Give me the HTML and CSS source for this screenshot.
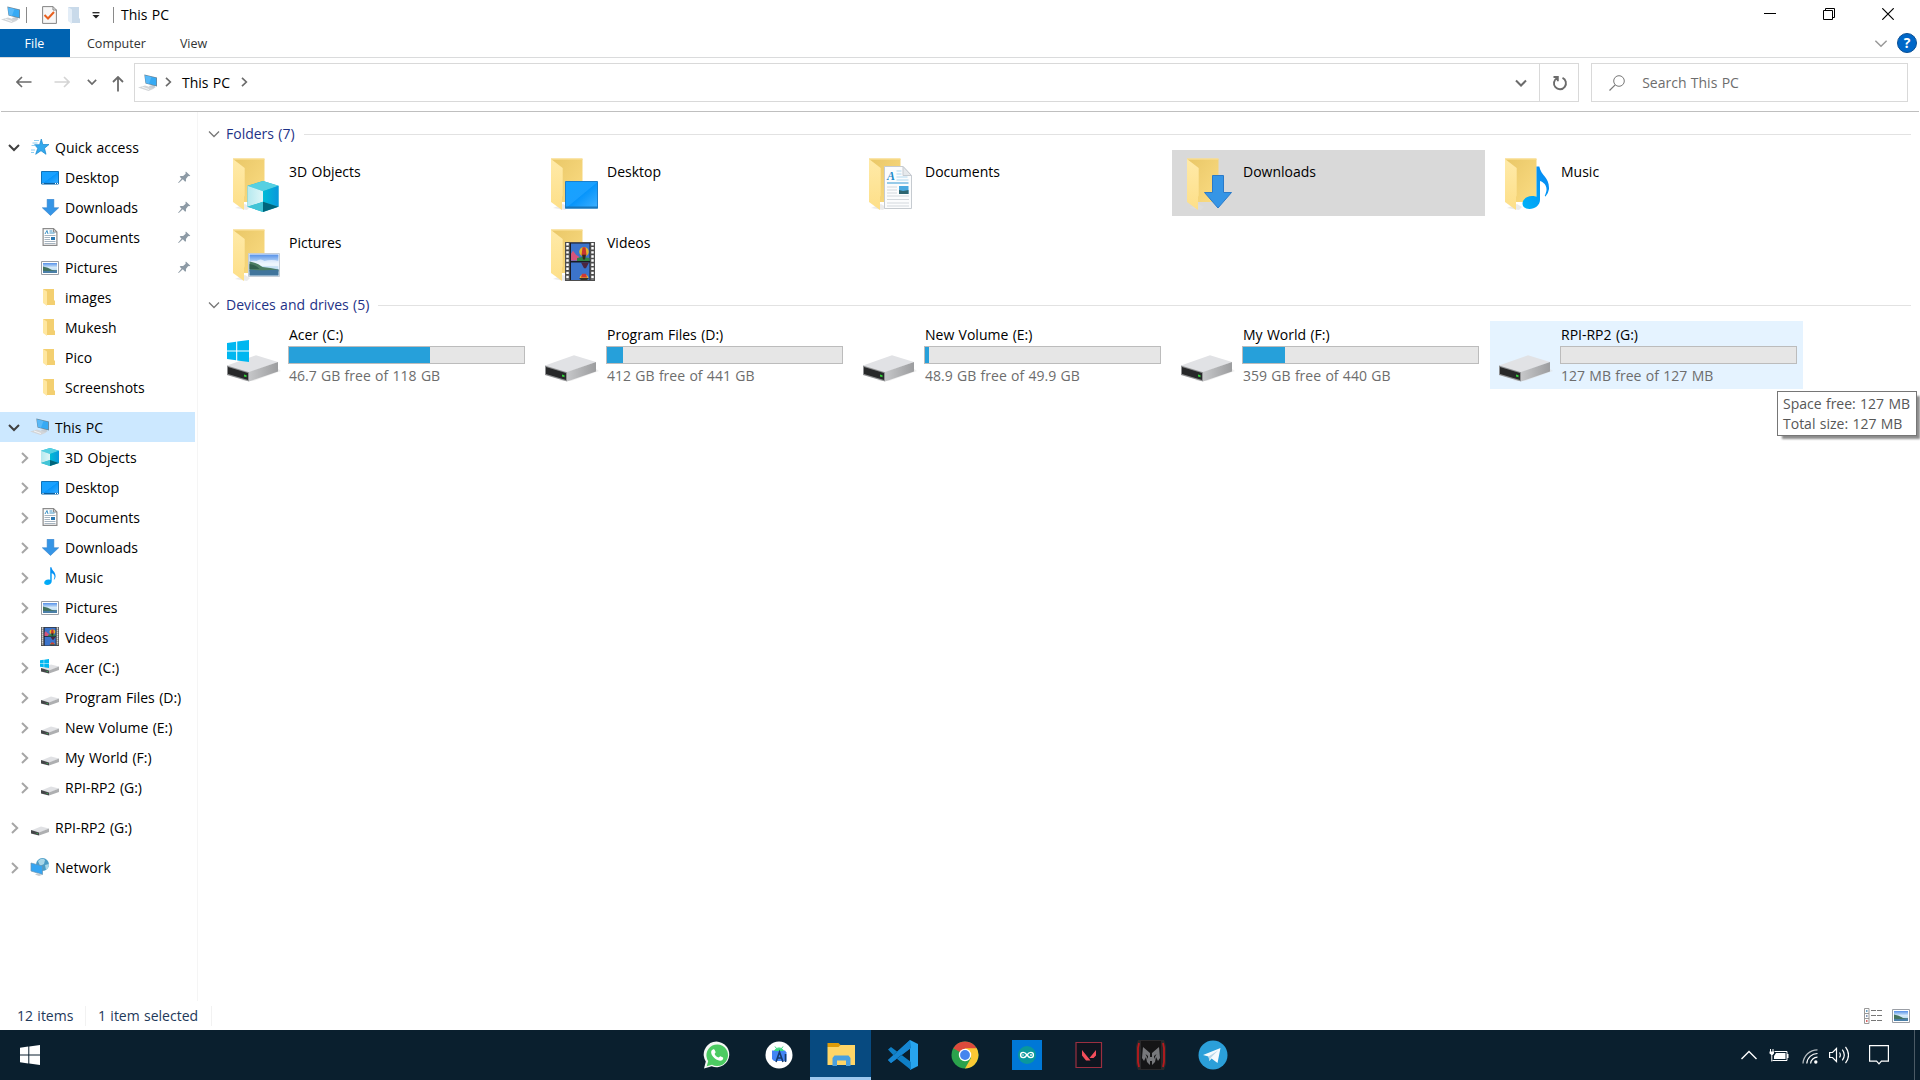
FILE: index.html
```
<!DOCTYPE html>
<html lang="en">
<head>
    <meta charset="UTF-8">
    <meta name="viewport" content="width=device-width, initial-scale=1.0">
    <title>This PC</title>
    <link rel="stylesheet" href="styles.css">
</head>
<body>
    <!-- icon sprite -->
    <svg class="sprite" width="0" height="0">
        <defs>
            <linearGradient id="gback" x1="0" y1="0" x2="1" y2="1"><stop offset="0" stop-color="#e9c767"/><stop offset="1" stop-color="#fbdc83"/></linearGradient>
            <linearGradient id="gfront" x1="0" y1="0" x2="0" y2="1"><stop offset="0" stop-color="#ffeaa8"/><stop offset="1" stop-color="#fddf88"/></linearGradient>
            <linearGradient id="gblue" x1="0" y1="0" x2="1" y2="1"><stop offset="0" stop-color="#16a3ff"/><stop offset=".5" stop-color="#1aa0ff"/><stop offset=".52" stop-color="#0795fb"/><stop offset="1" stop-color="#3fb0ff"/></linearGradient>
            <linearGradient id="gsky" x1="0" y1="0" x2="0" y2="1"><stop offset="0" stop-color="#5590e8"/><stop offset=".45" stop-color="#d5eafa"/><stop offset="1" stop-color="#a8cfe8"/></linearGradient>
            <linearGradient id="gside" x1="0" y1="0" x2="1" y2="0"><stop offset="0" stop-color="#c6c7c9"/><stop offset="1" stop-color="#9c9d9f"/></linearGradient>
            <linearGradient id="gcl" x1="0" y1="0" x2="1" y2="0"><stop offset="0" stop-color="#b5e9ef"/><stop offset="1" stop-color="#dff6f7"/></linearGradient>
            <linearGradient id="gcr" x1="0" y1="0" x2="1" y2="0"><stop offset="0" stop-color="#00bcd6"/><stop offset="1" stop-color="#0a97dc"/></linearGradient>
            <linearGradient id="gnote" x1="0" y1="1" x2="1" y2="0"><stop offset="0" stop-color="#00b4f8"/><stop offset="1" stop-color="#0784f2"/></linearGradient>
        </defs>
        <symbol id="folder" viewBox="0 0 36 54">
            <path d="M2 50l12 2 3-3-5-3z" fill="#ddd" opacity=".6"/>
            <path d="M0 1h31.500v43H10z" fill="url(#gback)"/>
            <path d="M0 1h31.500" stroke="#f8dc8f" stroke-width="1.500"/>
            <path d="M0 1l11.700 9v27.500L11 39v13L0 44z" fill="url(#gfront)"/>
        </symbol>
        <symbol id="cube" viewBox="0 0 32 32">
            <path d="M16 0l16 5v21.500L16 32 0 26.500V5z" fill="#1fb8cf"/>
            <path d="M0 5l16-5 16 5-16 5.500z" fill="#56d0e2"/>
            <path d="M0 5l16 5.500v11L0 26.500z" fill="url(#gcl)"/>
            <path d="M32 5l-16 5.500v11l16 5z" fill="url(#gcr)"/>
            <path d="M0 26.500l16-5V32z" fill="#42c4d6"/>
            <path d="M32 26.500l-16-5V32z" fill="#00657c"/>
        </symbol>
        <symbol id="monitor" viewBox="0 0 18 14" preserveAspectRatio="none">
            <path d="M.5.500h17v12.500H.5z" fill="url(#gblue)" stroke="#1272b8"/>
            <path d="M1 12.500h16" stroke="#0d5e9c" stroke-width="1.200"/>
            <path d="M1.500 12.500h1M14 12.500h1M16 12.500h1" stroke="#fff"/>
        </symbol>
        <symbol id="screen" viewBox="0 0 33 28">
            <path d="M.5.500h32v26.500H.5z" fill="url(#gblue)" stroke="#1c7ecb"/>
            <path d="M0 26.500h33" stroke="#1776bb" stroke-width="2"/>
        </symbol>
        <symbol id="arrow" viewBox="0 0 28 34" preserveAspectRatio="none">
            <path d="M8.500.500h11V17.500H27.500L14 33 .5 17.500h8z" fill="#3595e6" stroke="#2a7ac9"/>
        </symbol>
        <symbol id="doc" viewBox="0 0 15 18">
            <path d="M.6.600H11L14.400 4v13.400H.6z" fill="#fff" stroke="#8b8b8b" stroke-width="1.200"/>
            <path d="M11 .5V4h3.500" fill="none" stroke="#8b8b8b"/>
            <path d="M2.500 6l2-3.500L5.500 6M7 3h3M7 5h5" fill="none" stroke="#3d93c6"/>
            <path d="M2 7.500h11M2 9.500h5.500M2 11.500h5.500M2 13.500h11M2 15.500h11" stroke="#9cacb9" stroke-width=".9"/>
            <path d="M8.500 9h4v3h-4z" fill="#2878b4"/>
        </symbol>
        <symbol id="bigdoc" viewBox="0 0 28 43">
            <path d="M.5.500h18.500l8.500 9v33H.5z" fill="#fbfcfd" stroke="#c6cbd0"/>
            <path d="M19 .5v9h8.500z" fill="#e6e9ec" stroke="#c6cbd0"/>
            <path d="M3 17h21.500" stroke="#3299d5"/>
            <path d="M12.500 5h5M12.500 8h5M12.500 11h11M12.500 14h12" stroke="#b0d8ef"/>
            <path d="M3 21h10M3 24h10M3 27h10M3 30h22M3 33.500h22M3 37h22M3 40h22" stroke="#d3d8dd"/>
            <path d="M15 20h9.500v8H15z" fill="#4aa9e0"/><path d="M15 24l4 1 5.500-1v4H15z" fill="#2d6570"/>
        </symbol>
        <symbol id="photo" viewBox="0 0 18 14" preserveAspectRatio="none">
            <path d="M.5.500h17v13H.5z" fill="#fff" stroke="#9a9ea5"/>
            <path d="M2 2h14v10H2z" fill="url(#gsky)"/>
            <path d="M2 5.500q5 .5 9 3.500l5 .3V12H2z" fill="#44735f"/>
            <path d="M2 9.700q7 1 14-.4V12H2z" fill="#4a7fa8"/>
        </symbol>
        <symbol id="bigphoto" viewBox="0 0 32 24" preserveAspectRatio="none">
            <path d="M.5.500h31v23H.5z" fill="#fff" stroke="#c4cdd7"/>
            <path d="M1.500 1.500h29v21h-29z" fill="url(#gsky)"/>
            <path d="M1.500 9q3-2 7-1 4-3 8 0 7-2 14 0v5h-29z" fill="#fff" opacity=".6"/>
            <path d="M1.500 8.500q7 1 13 5.500 8 .5 16 2.500v2h-29z" fill="#4c7d62"/>
            <path d="M1.500 11q7 1 10 5h-10z" fill="#315f4d"/>
            <path d="M1.500 16.500q14 1.500 29 0v6h-29z" fill="#41759c"/>
        </symbol>
        <symbol id="film" viewBox="0 0 30 40" preserveAspectRatio="none">
            <path d="M0 0h30v40H0z" fill="#4d4d4d"/>
            <path d="M2.500 1v38M27.500 1v38" stroke="#fff" stroke-width="2.500" stroke-dasharray="2.500 1.700"/>
            <path d="M5 1h20v38H5z" fill="#1b1b22"/>
            <path d="M6 1.500h18.500v18H6zM6 21h18.500v18H6z" fill="#3c74cb"/>
            <path d="M6 12l2-3 3 4 3 2v4H6z" fill="#d5547b"/>
            <path d="M12 16.500l5-1 7.500 1v3H12z" fill="#318443"/>
            <circle cx="19" cy="10" r="4.800" fill="#e3b52b"/><path d="M17.500 5.500h3l1 8h-5z" fill="#c63531"/><path d="M17 13h4l-1 5h-2z" fill="#34281c"/>
            <path d="M16 21h8l-3 6h-2z" fill="#4b263e"/>
            <path d="M14.500 37a4.600 5 0 0 1 9 0z" fill="#e6b531"/><path d="M17 32.500h4l1 4h-6z" fill="#ce3934"/><path d="M14 37h10l-2 2h-6z" fill="#343426"/>
        </symbol>
        <symbol id="note" viewBox="0 0 28 43" preserveAspectRatio="none">
            <path d="M14.500.500h2.800C19 10 27.500 11 27 23q-.5 4-3.500 7.500l-.8-.5c4-8 1-13-4.700-15V34c0 5-5 9-10.500 9C3 43 .5 40.500.5 37.500c0-4 4-7.500 9.500-7.500 2 0 3.500.3 4.500.8z" fill="url(#gnote)"/>
        </symbol>
        <symbol id="smallfolder" viewBox="0 0 12 17">
            <path d="M0 0h11v11l1 1v4H3z" fill="#f3cf70"/><path d="M0 0l4 2.500V17L0 14z" fill="#ffe7a0"/>
        </symbol>
        <symbol id="drive" viewBox="0 0 54 28">
            <path d="M14 26h12l28-10-3-2z" fill="#ddd" opacity=".5"/>
            <path d="M0 10.500L29 .3 51 7 22 17.500z" fill="#e1e2e5"/>
            <path d="M51 7v9.500L22 26.500v-9.500z" fill="url(#gside)"/>
            <path d="M0 10.500l22 6.800v9.200L0 20z" fill="#8f9092"/>
            <path d="M1 12l20 6v7L1 19z" fill="#272829"/>
            <path d="M17 19.500l2.500.7v2l-2.500-.6z" fill="#32d038"/>
        </symbol>
        <symbol id="smalldrive" viewBox="0 0 18 10">
            <path d="M0 4.500L10 .5 18 2.500 8 7z" fill="#e0e1e4"/><path d="M18 2.500V6L8 9.500V6.500z" fill="#aeafb1"/><path d="M0 4l8 2.500v3L0 7.500z" fill="#444648"/><path d="M5.500 7.500h1.500" stroke="#3c9d53"/>
        </symbol>
        <symbol id="win" viewBox="0 0 20 20">
            <path d="M0 2.800L8.300 1.600v7.900H0zM9.300 1.400L20 0v9.500H9.300zM0 10.500h8.300v8L0 17.300zM9.300 10.500H20V20L9.300 18.600z" fill="currentColor"/>
        </symbol>
        <symbol id="pc" viewBox="0 0 20 18">
            <path d="M11 12l5-1.500 1.500 3-5 1.500z" fill="#c5cdd4"/>
            <path d="M6.300.6L19 3.500v9L7.500 9.600z" fill="#6d8799"/>
            <path d="M7 1.400l11.200 2.700v7.500L8 9z" fill="#36aaf4"/>
            <path d="M7 1.400l6.500 1.600L11 9.800 8 9z" fill="#58b9f8"/>
            <path d="M0 13.500l7-2 9.500 3-6 2.500z" fill="#d2d5d8"/><path d="M4 13l7 2.500" stroke="#f3f4f5"/>
        </symbol>
        <symbol id="star" viewBox="0 0 18 18">
            <path d="M10.300 1l1.500 5.500H18L13.500 10.200 15 16.300l-5-3.600-5.300 3.600 2-6L3.600 6.700h5z" fill="#34a9ed" stroke="#1686cf" stroke-width=".7"/>
            <path d="M3 2.500h5M1.500 5h5M.5 7.500h4M0 12h4M0 14.500h3" stroke="#81c8f0" stroke-width=".9"/>
        </symbol>
        <symbol id="net" viewBox="0 0 20 18">
            <circle cx="12.500" cy="6.500" r="6.500" fill="#4b9cc6"/><path d="M8 3q4-4 7-1l-1 4-4 2zM15 7l4-1q0 4-3 6z" fill="#a8d6e8"/>
            <path d="M1 5l11.500 3v8.500L1 13z" fill="#36a5f2" stroke="#6a93b0" stroke-width=".7"/><path d="M5 16.500l3-1.500 4 2-3 1z" fill="#c4ccd2"/>
        </symbol>
        <symbol id="pin" viewBox="0 0 14 14">
            <path d="M8.500.5L13.300 5l-1.500.6-.8-.1-2.500 3 .2 2.200-1 .8-2.500-2.600L.8 13l-.7-.3 3.700-4.600-2-2 1-.8 2.700.1 2.800-2.500-.3-1z" fill="#8d9aa5"/>
        </symbol>
        <symbol id="down" viewBox="0 0 12 8"><path d="M1 1.500l5 5 5-5" fill="none" stroke="currentColor" stroke-width="var(--sw, 1.300)"/></symbol>
        <symbol id="right" viewBox="0 0 8 12"><path d="M1 1l5.200 5L1 11" fill="none" stroke="currentColor" stroke-width="2"/></symbol>
    </svg>

    <div class="titlebar">
        <svg class="t-pc"><use href="#pc"/></svg>
        <i class="vsep"></i>
        <svg class="t-check" viewBox="0 0 15 18"><path d="M.6.600H11L14.400 4v13.400H.6z" fill="#f7f7f7" stroke="#858585"/><path d="M11 .5V4h3.500" fill="none" stroke="#858585"/><path d="M2.500 9L6 12.500l6-6.500" fill="none" stroke="#e8601f" stroke-width="2"/></svg>
        <svg class="t-folder" viewBox="0 0 12 17"><path d="M0 0h11v11l1 1v4H3z" fill="#c9daea"/><path d="M0 0l4 2.500V17L0 14z" fill="#e3edf7"/></svg>
        <svg class="t-menu" viewBox="0 0 8 7"><path d="M.5.700h7" stroke="#222" stroke-width="1.300"/><path d="M.5 3h7L4 6.500z" fill="#222"/></svg>
        <i class="vsep"></i>
        <span class="title">This PC</span>
        <div class="winbtns">
            <svg viewBox="0 0 12 12"><path d="M0 5.500h12" stroke="#000"/></svg>
            <svg viewBox="0 0 12 12"><path d="M.5 2.500h9v9h-9zM2.500 2.500v-2h9v9h-2" fill="none" stroke="#000"/></svg>
            <svg viewBox="0 0 12 12"><path d="M.3.300l11.400 11.400M11.700.300L.3 11.700" stroke="#000" stroke-width="1.200"/></svg>
        </div>
    </div>

    <div class="tabs">
        <span class="file">File</span>
        <span class="tab-computer">Computer</span>
        <span class="tab-view">View</span>
        <svg class="collapse"><use href="#down"/></svg>
        <b class="help">?</b>
    </div>

    <div class="addressbar">
        <div class="arrows">
            <svg class="back" viewBox="0 0 16 12"><path d="M15.500 6H1M6 1L1 6l5 5" fill="none" stroke="#6b6b6b" stroke-width="1.600"/></svg>
            <svg class="forward" viewBox="0 0 16 12"><path d="M.5 6H15M10 1l5 5-5 5" fill="none" stroke="#d4d4d4" stroke-width="1.600"/></svg>
            <svg class="recent"><use href="#down"/></svg>
            <svg class="up" viewBox="0 0 12 16"><path d="M6 15.500V1M1 6l5-5 5 5" fill="none" stroke="#6b6b6b" stroke-width="1.800"/></svg>
        </div>
        <div class="path">
            <svg class="p-pc"><use href="#pc"/></svg>
            <svg class="crumb"><use href="#right"/></svg>
            <span>This PC</span>
            <svg class="crumb"><use href="#right"/></svg>
            <svg class="drop"><use href="#down"/></svg>
            <div class="refresh"><svg viewBox="0 0 16 16"><path d="M10.500 2.800a6 6 0 1 1-5.500.2M1.500 2h4.300v4.300" fill="none" stroke="#6b6b6b" stroke-width="1.900"/></svg></div>
        </div>
        <div class="search">
            <svg viewBox="0 0 16 16"><circle cx="10" cy="6" r="5.300" fill="none" stroke="#777"/><path d="M6.200 9.800L.5 15.500" stroke="#777" stroke-width="1.200"/></svg>
            <span>Search This PC</span>
        </div>
    </div>

    <div class="main">
        <ul class="nav">
            <li class="top open"><svg class="chev"><use href="#down"/></svg><svg class="ico"><use href="#star"/></svg><span>Quick access</span></li>
            <li class="pinned"><svg class="ico wide"><use href="#monitor"/></svg><span>Desktop</span><svg class="pin"><use href="#pin"/></svg></li>
            <li class="pinned"><svg class="ico arr"><use href="#arrow"/></svg><span>Downloads</span><svg class="pin"><use href="#pin"/></svg></li>
            <li class="pinned"><svg class="ico"><use href="#doc"/></svg><span>Documents</span><svg class="pin"><use href="#pin"/></svg></li>
            <li class="pinned"><svg class="ico wide"><use href="#photo"/></svg><span>Pictures</span><svg class="pin"><use href="#pin"/></svg></li>
            <li class="pinned"><svg class="ico fold"><use href="#smallfolder"/></svg><span>images</span></li>
            <li class="pinned"><svg class="ico fold"><use href="#smallfolder"/></svg><span>Mukesh</span></li>
            <li class="pinned"><svg class="ico fold"><use href="#smallfolder"/></svg><span>Pico</span></li>
            <li class="pinned"><svg class="ico fold"><use href="#smallfolder"/></svg><span>Screenshots</span></li>
            <li class="top open group current"><svg class="chev"><use href="#down"/></svg><svg class="ico"><use href="#pc"/></svg><span>This PC</span></li>
            <li><svg class="chev"><use href="#right"/></svg><svg class="ico"><use href="#cube"/></svg><span>3D Objects</span></li>
            <li><svg class="chev"><use href="#right"/></svg><svg class="ico wide"><use href="#monitor"/></svg><span>Desktop</span></li>
            <li><svg class="chev"><use href="#right"/></svg><svg class="ico"><use href="#doc"/></svg><span>Documents</span></li>
            <li><svg class="chev"><use href="#right"/></svg><svg class="ico arr"><use href="#arrow"/></svg><span>Downloads</span></li>
            <li><svg class="chev"><use href="#right"/></svg><svg class="ico mus"><use href="#note"/></svg><span>Music</span></li>
            <li><svg class="chev"><use href="#right"/></svg><svg class="ico wide"><use href="#photo"/></svg><span>Pictures</span></li>
            <li><svg class="chev"><use href="#right"/></svg><svg class="ico vid"><use href="#film"/></svg><span>Videos</span></li>
            <li><svg class="chev"><use href="#right"/></svg><svg class="ico acer" viewBox="0 0 20 18"><use href="#smalldrive" x="1" y="6" width="18" height="10"/><g class="cyan"><use href="#win" y="1" width="9" height="9"/></g></svg><span>Acer (C:)</span></li>
            <li><svg class="chev"><use href="#right"/></svg><svg class="ico drv"><use href="#smalldrive"/></svg><span>Program Files (D:)</span></li>
            <li><svg class="chev"><use href="#right"/></svg><svg class="ico drv"><use href="#smalldrive"/></svg><span>New Volume (E:)</span></li>
            <li><svg class="chev"><use href="#right"/></svg><svg class="ico drv"><use href="#smalldrive"/></svg><span>My World (F:)</span></li>
            <li><svg class="chev"><use href="#right"/></svg><svg class="ico drv"><use href="#smalldrive"/></svg><span>RPI-RP2 (G:)</span></li>
            <li class="top group"><svg class="chev"><use href="#right"/></svg><svg class="ico drv"><use href="#smalldrive"/></svg><span>RPI-RP2 (G:)</span></li>
            <li class="top group"><svg class="chev"><use href="#right"/></svg><svg class="ico"><use href="#net"/></svg><span>Network</span></li>
        </ul>

        <div class="content">
            <div class="heading"><svg><use href="#down"/></svg><span>Folders (7)</span></div>
            <div class="tiles folders">
                <div class="tile"><svg class="pic" viewBox="0 0 56 66"><use href="#folder" x="5" y="8" width="36" height="54"/><use href="#cube" x="19" y="31" width="32" height="31"/></svg><span>3D Objects</span></div>
                <div class="tile"><svg class="pic" viewBox="0 0 56 66"><use href="#folder" x="5" y="8" width="36" height="54"/><use href="#screen" x="19" y="31" width="33" height="28"/></svg><span>Desktop</span></div>
                <div class="tile"><svg class="pic" viewBox="0 0 56 66"><use href="#folder" x="5" y="8" width="36" height="54"/><use href="#bigdoc" x="20" y="16" width="28" height="43"/><text x="23" y="30" class="doc-letter">A</text></svg><span>Documents</span></div>
                <div class="tile selected"><svg class="pic" viewBox="0 0 56 66"><use href="#folder" x="5" y="8" width="36" height="54"/><use href="#arrow" x="22" y="25" width="28" height="34"/></svg><span>Downloads</span></div>
                <div class="tile"><svg class="pic" viewBox="0 0 56 66"><use href="#folder" x="5" y="8" width="36" height="54"/><use href="#note" x="22" y="16" width="28" height="43"/></svg><span>Music</span></div>
                <div class="tile"><svg class="pic" viewBox="0 0 56 66"><use href="#folder" x="5" y="8" width="36" height="54"/><use href="#bigphoto" x="20" y="32" width="32" height="24"/></svg><span>Pictures</span></div>
                <div class="tile"><svg class="pic" viewBox="0 0 56 66"><use href="#folder" x="5" y="8" width="36" height="54"/><use href="#film" x="19" y="21" width="30" height="39"/></svg><span>Videos</span></div>
            </div>

            <div class="heading second"><svg><use href="#down"/></svg><span>Devices and drives (5)</span></div>
            <div class="tiles drives">
                <div class="tile"><svg class="pic" viewBox="0 0 56 68"><use href="#drive" x="-1" y="34" width="54" height="28"/><g class="cyan"><use href="#win" x="-1" y="19" width="22" height="22"/></g></svg><div class="info"><span>Acer (C:)</span><div class="bar"><div style="width:141px"></div></div><small>46.7 GB free of 118 GB</small></div></div>
                <div class="tile"><svg class="pic" viewBox="0 0 56 68"><use href="#drive" x="-1" y="34" width="54" height="28"/></svg><div class="info"><span>Program Files (D:)</span><div class="bar"><div style="width:16px"></div></div><small>412 GB free of 441 GB</small></div></div>
                <div class="tile"><svg class="pic" viewBox="0 0 56 68"><use href="#drive" x="-1" y="34" width="54" height="28"/></svg><div class="info"><span>New Volume (E:)</span><div class="bar"><div style="width:4px"></div></div><small>48.9 GB free of 49.9 GB</small></div></div>
                <div class="tile"><svg class="pic" viewBox="0 0 56 68"><use href="#drive" x="-1" y="34" width="54" height="28"/></svg><div class="info"><span>My World (F:)</span><div class="bar"><div style="width:42px"></div></div><small>359 GB free of 440 GB</small></div></div>
                <div class="tile hover"><svg class="pic" viewBox="0 0 56 68"><use href="#drive" x="-1" y="34" width="54" height="28"/></svg><div class="info"><span>RPI-RP2 (G:)</span><div class="bar"></div><small>127 MB free of 127 MB</small></div></div>
            </div>
        </div>
    </div>
    <div class="tooltip">Space free: 127 MB<br>Total size: 127 MB</div>

    <div class="status">
        <span class="count">12 items</span>
        <span class="sel">1 item selected</span>
        <div class="views">
            <svg class="details" viewBox="0 0 18 16"><path d="M.5.500h4.500v15H.5zM.5 5.500h4.500M.5 10.500h4.500" fill="#fff" stroke="#999"/><path d="M2 3h1.500" stroke="#3a7fae" stroke-width="1.500"/><path d="M2 8h1.500" stroke="#5a78a0" stroke-width="1.500"/><path d="M2 13h1.500" stroke="#c33" stroke-width="1.500"/><path d="M7 2.500h5M13 2.500h5M7 7.500h5M13 7.500h5M7 12.500h5M13 12.500h5" stroke="#777"/></svg>
            <svg class="large"><use href="#photo"/></svg>
        </div>
    </div>

    <div class="taskbar">
        <svg class="start"><use href="#win"/></svg>
        <div class="apps">
            <div class="app"><svg viewBox="0 0 30 30"><path d="M2 28.500l1.800-7A12.800 12.800 0 1 1 9.700 26.300z" fill="#f4f6f4"/><path d="M4.700 26.200l1.500-5A10.800 10.800 0 1 1 10 24.700z" fill="#4ccb62"/><path d="M10.800 9.500c.7-.5 1.500-.4 1.800.2l1 2.400c.2.600-.8 1.400-1 1.900.8 1.800 2.100 2.900 4 3.600.6 0 1.100-1.400 1.800-1.300l2.600 1.300c.5.400.1 2.100-.8 2.600-1.800 1.100-4.700.3-7.300-1.700-2.700-2.300-4.200-5-3.700-7 .2-.9.900-1.500 1.600-2z" fill="#fff"/></svg></div>
            <div class="app"><svg viewBox="0 0 30 30"><circle cx="15" cy="15" r="13.500" fill="#fff"/><path d="M8 10.500h13l1.500 2v8.500H10l-2-2z" fill="#4285f4"/><path d="M10.500 10.500a4.800 4 0 0 1 9 0zM11 6.500l1.500 2M19 6.500l-1.500 2" fill="#3ddc84" stroke="#3ddc84"/><path d="M12 22l3.500-10L19 22M13.500 18h4.500M21.500 14v8" fill="none" stroke="#163b6b" stroke-width="1.600"/></svg></div>
            <div class="app active"><svg viewBox="0 0 30 30"><path d="M1.500 3h11l2 2v2h-13z" fill="#dd9b09"/><path d="M1.500 7h11l2-2H29v20H1.500z" fill="#fed567"/><path d="M6.500 25.500v-7.500l2-2.500h14l2 2.500V26H20v-5.500h-9V26H6.500z" fill="#4aa0df"/></svg></div>
            <div class="app"><svg viewBox="0 0 30 30"><path d="M22 0v30l8-4V4z" fill="#27a4ee"/><path d="M22 0L0 20l3 3L23 8zM0 9.500L3 7l20 15v8L8 18z" fill="#0f7fc6"/><path d="M22 0v8.500L3 23l-3-3z" fill="#1686d2"/></svg></div>
            <div class="app"><svg viewBox="0 0 30 30"><circle cx="15" cy="15" r="13.500" fill="#2ba24c"/><path d="M15 15L3.300 8.300A13.500 13.500 0 0 1 26.700 8.300z" fill="#dc4a3c"/><path d="M15 8.300h11.700A13.500 13.500 0 0 1 15 28.500l6-10.500z" fill="#fbc934"/><circle cx="15" cy="15" r="6.200" fill="#fff"/><circle cx="15" cy="15" r="4.900" fill="#4585ee"/></svg></div>
            <div class="app"><svg viewBox="0 0 30 30"><path d="M0 0h30v30H0z" fill="#0078d7"/><circle cx="15" cy="15" r="9" fill="#0a989c"/><path d="M15 15q-1.800-2.600-3.800-2.600a2.600 2.600 0 0 0 0 5.200q2 0 3.800-2.600 1.800-2.600 3.800-2.600a2.600 2.600 0 0 1 0 5.200q-2 0-3.800-2.600z" fill="none" stroke="#fff" stroke-width="1.400"/><path d="M10 15h2M18 15h2M19 14v2" stroke="#fff" stroke-width=".8"/></svg></div>
            <div class="app"><svg viewBox="0 0 30 30"><path d="M2 2.500h25.500v25H2z" fill="#0e151f" stroke="#9b2f40" stroke-width="1.200"/><path d="M8 10l8.500 10.500h-4.500L8 15.500zM22 10v5.500L19.500 18h-4z" fill="#f44e5b"/></svg></div>
            <div class="app"><svg viewBox="0 0 30 30"><path d="M2 0h26l2 6v18l-2 6H2l-2-6V6z" fill="#29292b"/><path d="M3 3L2 8v14l1 5M27 3l1 5v14l-1 5" fill="none" stroke="#b81a1e" stroke-width="1.800"/><path d="M5 1h20v28H5z" fill="#151516"/><path d="M7 7l7 6v12l-3-3-1-5-2 4-2-3zM23 7l-7 6v12l3-3 1-5 2 4 2-3z" fill="#77787b"/><path d="M9.500 14l2.500 2v3zM20.500 14L18 16v3z" fill="#161617"/><path d="M13.500 17h3v4h-3z" fill="#77787b"/></svg></div>
            <div class="app"><svg viewBox="0 0 30 30"><circle cx="15" cy="15" r="14.500" fill="#2b9fd9"/><path d="M5 15L22.500 8l-3 15-6-4.500L11.500 21 10.500 16.500z" fill="#f5fafd"/><path d="M10.500 16.500L20 10.500l-7.500 7.500-1 3z" fill="#b9d7e8"/></svg></div>
        </div>
        <div class="tray">
            <svg class="t-up" viewBox="0 0 16 10"><path d="M.5 9L8 1.500 15.500 9" fill="none" stroke="#fff" stroke-width="1.400"/></svg>
            <svg class="t-bat" viewBox="0 0 20 13"><path d="M5.500 2.500h12.500v9H3.500" fill="none" stroke="#fff"/><path d="M7 4h9.500v6H5V7zM18 5h1.500v4H18zM.5 2.500h4.500v2L3.500 6h-1L.5 4.500z" fill="#fff"/><path d="M1.500 0v3M4 0v3M2.800 5v7.500" stroke="#fff"/></svg>
            <svg class="t-wifi" viewBox="0 0 16 15"><g fill="none" stroke="#fff" stroke-width="1.200"><path d="M15.500 .8A14.500 14.500 0 0 0 1 14.500" opacity=".7"/><path d="M15.500 4.500A10.500 10.500 0 0 0 4.800 14.500"/><path d="M15.500 8.200A6.800 6.800 0 0 0 8.600 14.500"/></g><circle cx="13.800" cy="13" r="1.700" fill="#fff"/></svg>
            <svg class="t-vol" viewBox="0 0 20 18"><g fill="none" stroke="#fff" stroke-width="1.200"><path d="M.6 6.500h2.900L7.500 2.500v13L3.500 11.500H.6z"/><path d="M10.500 6.500q1.700 2.500 0 5M13.300 3.700q4 5.300 0 10.600M16.500 .8q6 8.200 0 16.400"/></g></svg>
            <svg class="t-note" viewBox="0 0 20 20"><path d="M.6.600h18.800v15.600h-7L10 18.800l-2.400-2.600h-7z" fill="none" stroke="#fff" stroke-width="1.200"/></svg>
        </div>
    </div>
</body>
</html>
```
FILE: styles.css
```
*{
    margin: 0;
    padding: 0;
    box-sizing: border-box;
}
body{
    width: 1920px;
    height: 1080px;
    overflow: hidden;
    background-color: white;
    color: #000;
    font: 14px/20px "Open Sans", "Noto Sans", sans-serif;
    word-spacing: .7px;
    display: flex;
    flex-direction: column;
}
li{
    list-style: none;
}
svg{
    display: block;
    flex: none;
}
.sprite{
    position: absolute;
}
.cyan{
    color: #00b7f0;
}
.doc-letter{
    font: italic bold 12px "Liberation Serif", serif;
    fill: #1d8bcb;
}

/* title bar */
.titlebar{
    height: 29px;
    display: flex;
    align-items: center;
}
.t-pc{
    width: 20px;
    height: 18px;
    margin-left: 1px;
    margin-right: 5px;
}
.vsep{
    width: 1px;
    height: 16px;
    background-color: #8a8a8a;
}
.t-check{
    width: 15px;
    height: 18px;
    margin-left: 15px;
}
.t-folder{
    width: 12px;
    height: 17px;
    margin: 1px 0 0 11px;
}
.t-menu{
    width: 8px;
    height: 7px;
    margin: 2px 13px 0 12px;
}
.title{
    margin-left: 7px;
}
.winbtns{
    margin-left: auto;
    margin-right: 26px;
    margin-bottom: 1px;
    display: flex;
    gap: 47px;
}
.winbtns svg{
    width: 12px;
    height: 12px;
}

/* ribbon tabs */
.tabs{
    height: 29px;
    display: flex;
    align-items: center;
    border-bottom: 1px solid #dadbdc;
    font-size: 12.5px;
    color: #333;
}
.file{
    width: 70px;
    height: 28px;
    padding-right: 1px;
    line-height: 29px;
    text-align: center;
    background-color: #0063b1;
    color: white;
}
.tab-computer,.tab-view{
    padding-top: 1px;
}
.tab-computer{
    margin: 0 34px 0 17px;
}
.collapse{
    width: 14px;
    height: 9px;
    margin-left: auto;
    color: #999;
}
.help{
    width: 20px;
    height: 20px;
    margin: 0 3px 0 9px;
    border-radius: 50%;
    border: 1px solid #0a4f94;
    background-color: #0067c8;
    color: white;
    font-size: 14px;
    line-height: 18px;
    text-align: center;
}

/* address bar */
.addressbar{
    height: 54px;
    padding: 5px 11px 10px 0;
    margin: 0 1px;
    display: flex;
    border-bottom: 1px solid #bfbfbf;
}
.arrows{
    width: 133px;
    display: flex;
    align-items: center;
}
.back,.forward{
    width: 16px;
    height: 12px;
    margin-left: 15px;
}
.forward{
    margin-left: 22px;
}
.recent{
    width: 10px;
    height: 8px;
    margin-left: 17px;
    color: #6b6b6b;
    --sw: 2;
}
.up{
    width: 12px;
    height: 16px;
    margin: 3px 0 0 15px;
}
.path{
    width: 1446px;
    height: 39px;
    border: 1px solid #d9d9d9;
    display: flex;
    align-items: center;
}
.p-pc{
    width: 20px;
    height: 18px;
    margin-left: 3px;
}
.crumb{
    width: 7px;
    height: 10px;
    margin: 0 10px 2px 7px;
    color: #6b6b6b;
}
.path span + .crumb{
    margin-left: 11px;
}
.drop{
    width: 12px;
    height: 8px;
    margin-left: auto;
    margin-right: 12px;
    color: #6b6b6b;
    --sw: 2;
}
.refresh{
    width: 39px;
    height: 37px;
    border-left: 1px solid #d9d9d9;
    display: flex;
    align-items: center;
    justify-content: center;
}
.refresh svg{
    width: 16px;
    height: 16px;
    margin-left: 2px;
}
.search{
    width: 317px;
    height: 39px;
    margin-left: 12px;
    padding-left: 17px;
    border: 1px solid #d9d9d9;
    display: flex;
    align-items: center;
    gap: 17px;
    color: #6d6d6d;
}
.search svg{
    width: 16px;
    height: 16px;
}

/* navigation pane */
.main{
    height: 889px;
    display: flex;
}
.nav{
    width: 198px;
    padding-top: 20px;
    border-right: 1px solid #f5f5f5;
}
.nav li{
    width: 195px;
    height: 30px;
    padding-left: 20px;
    display: flex;
    align-items: center;
}
.nav span{
    padding-top: 1px;
}
.nav .pinned{
    padding-left: 40px;
}
.nav .top{
    padding-left: 10px;
}
.nav .open{
    padding-left: 8px;
}
.nav .group{
    margin-top: 10px;
}
.nav .current{
    background-color: #cce8ff;
}
.chev{
    width: 8px;
    height: 12px;
    margin: 1px 11px 0 1px;
    color: #a6a6a6;
}
.open .chev{
    width: 12px;
    height: 9px;
    margin: 1px 10px 0 0;
    color: #404040;
    --sw: 2;
}
.ico{
    width: 20px;
    height: 18px;
    margin-right: 5px;
}
.wide{
    width: 18px;
    height: 14px;
    margin: 1px 6px 0 1px;
}
.arr{
    width: 17px;
    height: 17px;
    margin: 0 6px 0 2px;
}
.mus{
    width: 12px;
    height: 18px;
    margin: 0 9px 2px 4px;
}
.vid{
    width: 18px;
    height: 19px;
    margin: 0 6px 2px 1px;
}
.fold{
    width: 12px;
    height: 17px;
    margin: 0 10px 0 3px;
}
.drv{
    width: 18px;
    height: 10px;
    margin: 7px 6px 0 1px;
}
.pin{
    width: 13px;
    height: 13px;
    margin-left: auto;
    margin-right: 4px;
}

/* content */
.content{
    flex: 1;
    padding: 12px 9px 0 10px;
}
.heading{
    height: 20px;
    display: flex;
    align-items: center;
    color: #1e3287;
}
.heading svg{
    width: 12px;
    height: 8px;
    margin-right: 6px;
    color: #777;
}
.heading::after{
    content: "";
    flex: 1;
    height: 1px;
    margin-left: 9px;
    background-color: #e2e2e2;
}
.second{
    margin-top: 8px;
}
.tiles{
    display: grid;
    grid-template-columns: repeat(5, 313px);
    gap: 5px;
    margin: 6px 0 0 10px;
}
.tile{
    height: 66px;
    padding-left: 10px;
    display: flex;
}
.folders .tile > span{
    margin: 12px 0 0 5px;
}
.drives .tile{
    height: 68px;
}
.pic{
    width: 56px;
    height: 100%;
    overflow: visible;
}
.selected{
    background-color: #d9d9d9;
}
.hover{
    background-color: #e5f3ff;
}
.info{
    padding: 4px 0 0 4px;
}
.info span,.info small{
    display: block;
    margin-left: 1px;
    font-size: 14px;
}
.info small{
    color: #6d6d6d;
    margin-top: 2px;
}
.bar{
    width: 237px;
    height: 18px;
    margin-top: 1px;
    border: 1px solid #bcbcbc;
    background-color: #e6e6e6;
}
.bar div{
    height: 16px;
    background-color: #26a0da;
}
.tooltip{
    position: absolute;
    left: 1777px;
    top: 391px;
    width: 140px;
    height: 45px;
    padding: 2px 0 0 5px;
    border: 1px solid #767676;
    background-color: white;
    color: #575757;
    white-space: nowrap;
    box-shadow: 4px 4px 2px -1px rgba(0,0,0,.45);
}

/* status bar */
.status{
    height: 29px;
    display: flex;
    align-items: center;
    color: #1e395b;
}
.count{
    width: 86px;
    padding-left: 17px;
    border-right: 1px solid #f2f2f2;
}
.sel{
    width: 126px;
    padding-left: 12px;
    border-right: 1px solid #f2f2f2;
}
.views{
    margin-left: auto;
    margin-right: 10px;
    display: flex;
    align-items: center;
    gap: 10px;
}
.details{
    width: 18px;
    height: 16px;
}
.large{
    width: 18px;
    height: 14px;
}

/* taskbar */
.taskbar{
    height: 50px;
    background-color: #0a1f2e;
    display: flex;
    align-items: center;
}
.start{
    width: 20px;
    height: 20px;
    margin-left: 20px;
    color: white;
}
.apps{
    display: flex;
    gap: 1px;
    margin-left: 646px;
}
.app{
    width: 61px;
    height: 50px;
    display: flex;
    align-items: center;
    justify-content: center;
}
.app svg{
    width: 30px;
    height: 30px;
}
.active{
    background-color: #074a80;
    border-bottom: 3px solid #9cc8f0;
    padding-top: 3px;
}
.tray{
    margin-left: auto;
    height: 50px;
    width: 174px;
    margin-right: 5px;
    border-right: 1px solid #4b5a65;
    display: flex;
    align-items: center;
}
.t-up{
    width: 16px;
    height: 10px;
}
.t-bat{
    width: 20px;
    height: 13px;
    margin-left: 12px;
}
.t-wifi{
    width: 16px;
    height: 15px;
    margin: 2px 0 0 13px;
}
.t-vol{
    width: 20px;
    height: 18px;
    margin-left: 11px;
}
.t-note{
    width: 20px;
    height: 20px;
    margin-left: 20px;
}
```
